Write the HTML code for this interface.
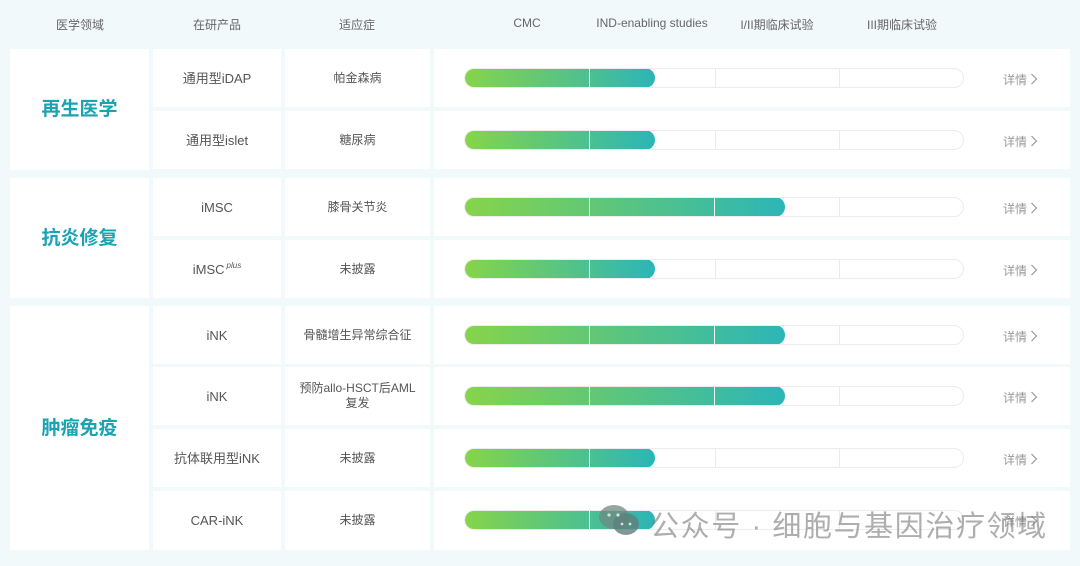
<!DOCTYPE html>
<html><head><meta charset="utf-8"><style>
*{margin:0;padding:0;box-sizing:border-box}
body{width:1080px;height:566px;background:#f1f9fa;position:relative;overflow:hidden;font-family:"Liberation Sans","Noto Sans CJK SC",sans-serif;color:#555}
.h{position:absolute;top:16px;font-size:12px;color:#666;text-align:center}
.c{position:absolute;background:#fff;display:flex;align-items:center;justify-content:center;text-align:center;font-size:13px;color:#555;line-height:15px}
.d{font-size:19px;font-weight:bold;color:#1aa3b3}
.bar{position:absolute;left:464px;width:500px;height:20px;border:1px solid #ececec;border-radius:10px;background:#fff;overflow:hidden}
.fill{position:absolute;left:0;top:-1px;height:20px;border-radius:10px;background:linear-gradient(90deg,#86d44a,#2cb5b8)}
.sep{position:absolute;top:0;width:1px;height:20px;background:#ebebeb}
.sepw{position:absolute;top:-1px;width:1px;height:20px;background:rgba(255,255,255,.9)}
.det{position:absolute;left:1003px;font-size:12px;color:#999;white-space:nowrap}
</style></head><body>
<div class="h" style="left:40px;width:80px">医学领域</div>
<div class="h" style="left:177px;width:80px">在研产品</div>
<div class="h" style="left:317px;width:80px">适应症</div>
<div class="h" style="left:497px;width:60px">CMC</div>
<div class="h" style="left:582px;width:140px">IND-enabling studies</div>
<div class="h" style="left:722px;width:110px">I/II期临床试验</div>
<div class="h" style="left:847px;width:110px">III期临床试验</div>

<div class="c d" style="left:10px;top:49px;width:139px;height:121px">再生医学</div>
<div class="c d" style="left:10px;top:178px;width:139px;height:120px">抗炎修复</div>
<div class="c d" style="left:10px;top:306px;width:139px;height:244px">肿瘤免疫</div>

<div id="rows"></div>
<script>
var tops=[49,111,178,240,306,367,429,491];
var fills=[190,190,320,190,320,320,190,190];
var prod=["通用型iDAP","通用型islet","iMSC","iMSC<sup style='font-size:8px;font-style:italic;position:relative;top:-4px;margin-left:2px'>plus</sup>","iNK","iNK","抗体联用型iNK","CAR-iNK"];
var ind=["帕金森病","糖尿病","膝骨关节炎","未披露","骨髓增生异常综合征","预防allo-HSCT后AML<br>复发","未披露","未披露"];
var h="";
for(var i=0;i<8;i++){var t=tops[i],hh=(i==7?59:58);
h+='<div class="c" style="left:153px;top:'+t+'px;width:128px;height:'+hh+'px">'+prod[i]+'</div>';
h+='<div class="c" style="left:285px;top:'+t+'px;width:145px;height:'+hh+'px;font-size:12px">'+ind[i]+'</div>';
h+='<div class="c" style="left:434px;top:'+t+'px;width:636px;height:'+hh+'px"></div>';
h+='<div class="bar" style="top:'+(t+19)+'px"><div class="sep" style="left:250px"></div><div class="sep" style="left:374px"></div><div class="fill" style="width:'+fills[i]+'px"></div><div class="sepw" style="left:124px"></div>'+(fills[i]>250?'<div class="sepw" style="left:249px"></div>':'')+'</div>';
h+='<div class="det" style="top:'+(t+22)+'px">详情 <svg width="8" height="12" viewBox="0 0 8 12" style="vertical-align:-1px"><path d="M1.5 1 L6.5 6 L1.5 11" fill="none" stroke="#999" stroke-width="1.2"/></svg></div>';
}
document.getElementById("rows").innerHTML=h;
</script>
<svg style="position:absolute;left:597px;top:503px" width="46" height="36" viewBox="0 0 46 36"><ellipse cx="17" cy="14" rx="15" ry="12" fill="#6f8a80" opacity=".75"/><ellipse cx="29" cy="21" rx="13" ry="11" fill="#5e7f7a" opacity=".8"/><circle cx="12" cy="12" r="1.6" fill="#ddd"/><circle cx="21" cy="12" r="1.6" fill="#ddd"/><circle cx="25" cy="21" r="1.4" fill="#ddd"/><circle cx="33" cy="21" r="1.4" fill="#ddd"/></svg>
<div style="position:absolute;left:650px;top:503px;font-size:29px;letter-spacing:1.6px;color:rgba(120,120,120,.6);white-space:nowrap">公众号 · 细胞与基因治疗领域</div>
</body></html>
